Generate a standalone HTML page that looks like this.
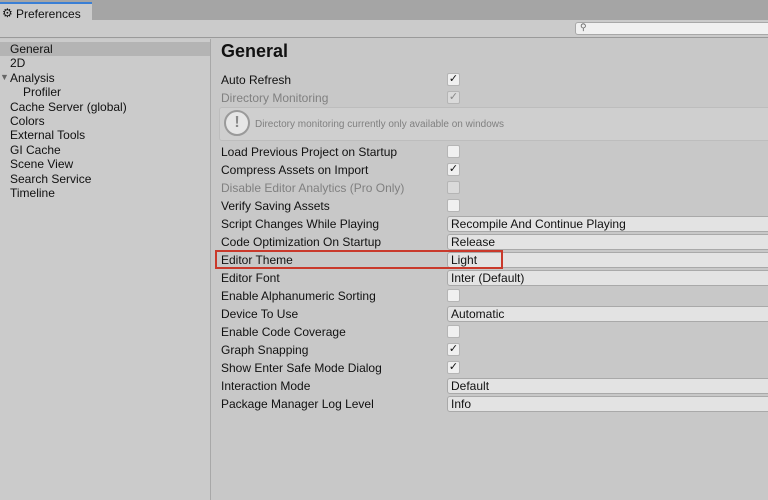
<!DOCTYPE html>
<html><head><style>
*{margin:0;padding:0;box-sizing:border-box}
body{width:768px;height:500px;background:#c8c8c8;font-family:"Liberation Sans",sans-serif;font-size:12px;color:#111;position:relative;overflow:hidden}
.abs{position:absolute}
.tabbar{left:0;top:0;width:768px;height:20px;background:#a5a5a5}
.tab{left:0;top:2px;width:92px;height:19px;background:#cbcbcb;border-top:2px solid #3a7fd5;font-size:12px;padding:3px 0 0 16px}
.toolbar{left:0;top:20px;width:768px;height:18px;background:#cbcbcb;border-bottom:1px solid #9a9a9a}
.search{left:575px;top:22px;width:200px;height:13px;background:#f0f0f0;border:1px solid #a8a8a8;border-radius:3px}
.side{left:0;top:39px;width:211px;height:461px;background:#cbcbcb;border-right:1px solid #a8a8a8}
.si{position:absolute;left:10px;font-size:12px;line-height:14px}
.sel{left:0;top:42px;width:210px;height:14px;background:#b4b4b4}
.lbl{position:absolute;left:221px;font-size:12px;line-height:14px;margin-top:1px}
.dis{color:#808080}
.cb{position:absolute;left:447px;width:13px;height:13px;background:#f0f0f0;border:1px solid #b5b5b5;border-radius:2px;font-size:11px;line-height:11px;text-align:center;margin-top:1px}
.cbd{background:#dadada;color:#888}
.dd{position:absolute;left:447px;width:330px;height:16px;background:#e3e3e3;border:1px solid #a9a9a9;border-radius:3px;padding-left:3px;font-size:12px;line-height:15px;margin-top:1px}
</style></head><body>
<div class="abs tabbar"></div>
<div class="abs tab"><span class="abs" style="left:2px;top:2px;font-size:12px">⚙</span>Preferences</div>
<div class="abs toolbar"></div>
<div class="abs search"><span class="abs" style="left:4px;top:-1px;font-size:9px;color:#666">⚲</span></div>
<div class="abs side"></div>
<div class="abs sel"></div>
<div class="si" style="top:42px">General</div>
<div class="si" style="top:56px">2D</div>
<div class="si" style="top:71px">Analysis</div>
<div class="abs" style="left:0;top:72px;font-size:9px;color:#666">▼</div>
<div class="si" style="top:85px;left:23px">Profiler</div>
<div class="si" style="top:100px">Cache Server (global)</div>
<div class="si" style="top:114px">Colors</div>
<div class="si" style="top:128px">External Tools</div>
<div class="si" style="top:143px">GI Cache</div>
<div class="si" style="top:157px">Scene View</div>
<div class="si" style="top:172px">Search Service</div>
<div class="si" style="top:186px">Timeline</div>

<div class="abs" style="left:221px;top:41px;font-size:18px;font-weight:bold">General</div>

<div class="lbl" style="top:72px">Auto Refresh</div><div class="cb" style="top:72px">✓</div>
<div class="lbl dis" style="top:90px">Directory Monitoring</div><div class="cb cbd" style="top:90px">✓</div>
<div class="abs" style="left:219px;top:107px;width:560px;height:34px;background:#cfcfcf;border:1px solid #bdbdbd;border-radius:3px"></div>
<div class="abs" style="left:224px;top:110px;width:26px;height:26px;border-radius:50%;background:#e6e6e6;border:2px solid #9a9a9a;text-align:center;font-weight:bold;font-size:16px;line-height:22px;color:#8a8a8a">!</div>
<div class="abs dis" style="left:255px;top:119px;font-size:10px">Directory monitoring currently only available on windows</div>
<div class="lbl" style="top:144px">Load Previous Project on Startup</div><div class="cb" style="top:144px"></div>
<div class="lbl" style="top:162px">Compress Assets on Import</div><div class="cb" style="top:162px">✓</div>
<div class="lbl dis" style="top:180px">Disable Editor Analytics (Pro Only)</div><div class="cb cbd" style="top:180px"></div>
<div class="lbl" style="top:198px">Verify Saving Assets</div><div class="cb" style="top:198px"></div>
<div class="lbl" style="top:216px">Script Changes While Playing</div><div class="dd" style="top:215px">Recompile And Continue Playing</div>
<div class="lbl" style="top:234px">Code Optimization On Startup</div><div class="dd" style="top:233px">Release</div>
<div class="lbl" style="top:252px">Editor Theme</div><div class="dd" style="top:251px">Light</div>
<div class="abs" style="left:215px;top:250px;width:288px;height:19px;border:2px solid #c9392b"></div>
<div class="lbl" style="top:270px">Editor Font</div><div class="dd" style="top:269px">Inter (Default)</div>
<div class="lbl" style="top:288px">Enable Alphanumeric Sorting</div><div class="cb" style="top:288px"></div>
<div class="lbl" style="top:306px">Device To Use</div><div class="dd" style="top:305px">Automatic</div>
<div class="lbl" style="top:324px">Enable Code Coverage</div><div class="cb" style="top:324px"></div>
<div class="lbl" style="top:342px">Graph Snapping</div><div class="cb" style="top:342px">✓</div>
<div class="lbl" style="top:360px">Show Enter Safe Mode Dialog</div><div class="cb" style="top:360px">✓</div>
<div class="lbl" style="top:378px">Interaction Mode</div><div class="dd" style="top:377px">Default</div>
<div class="lbl" style="top:396px">Package Manager Log Level</div><div class="dd" style="top:395px">Info</div>
</body></html>
